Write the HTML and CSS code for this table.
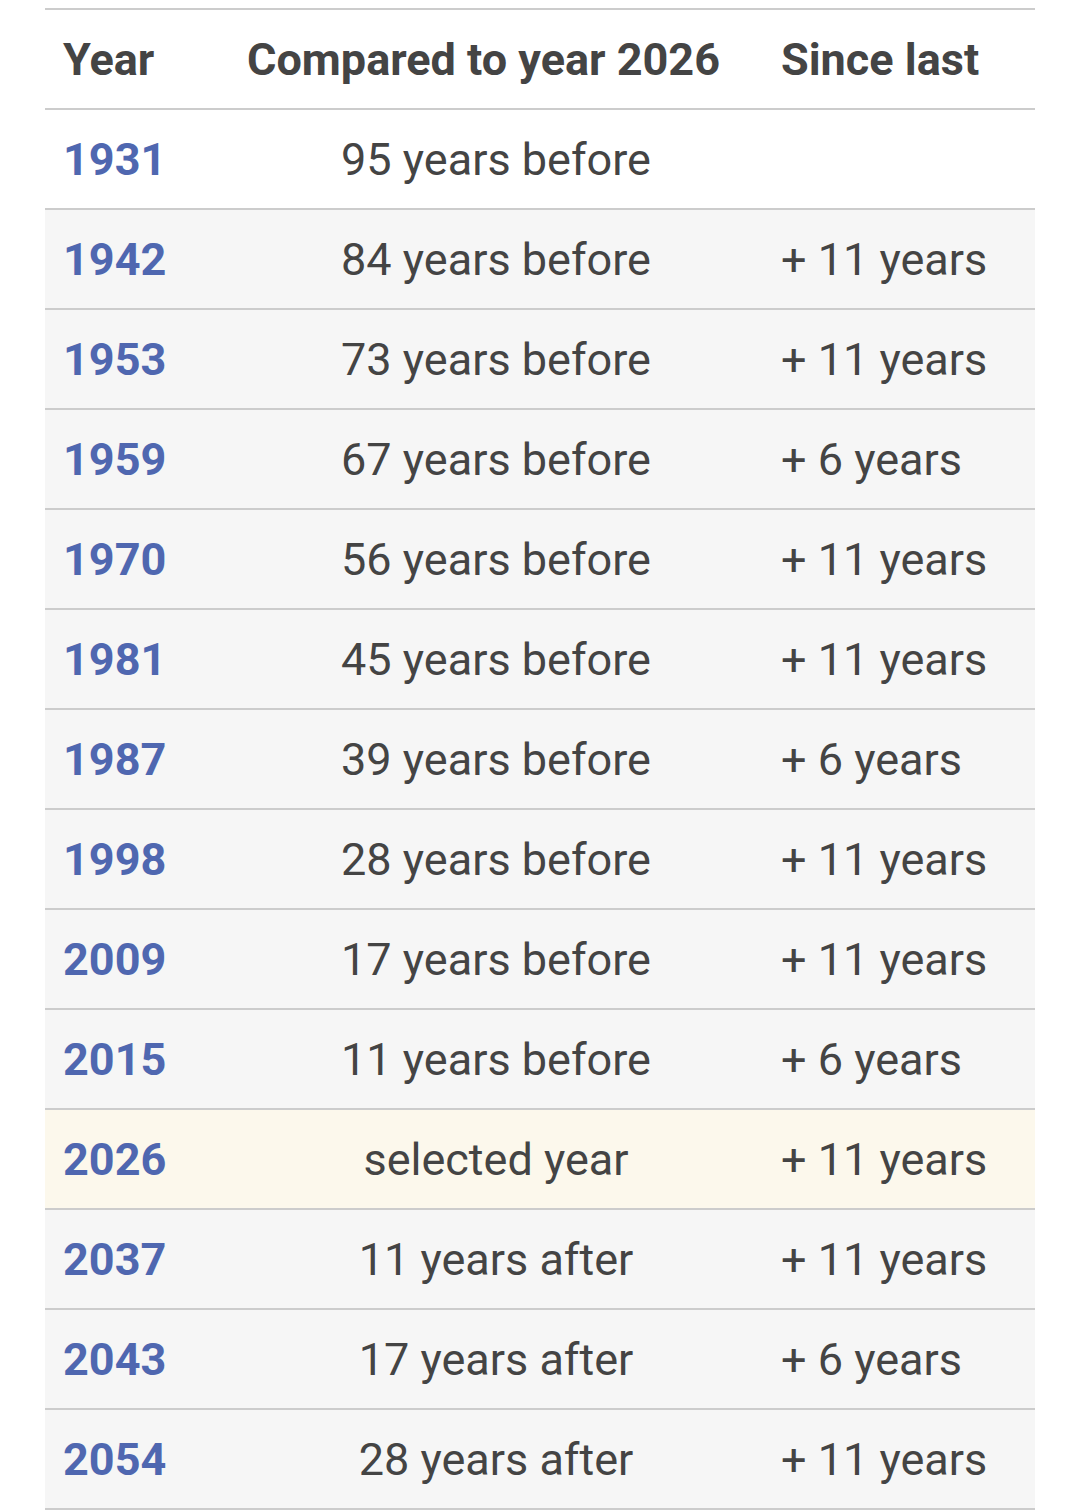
FILE: index.html
```html
<!DOCTYPE html>
<html>
<head>
<meta charset="utf-8">
<link rel="stylesheet" href="styles.css">
</head>
<body>
<div class="wrap">
<table class="years">
<thead>
<tr><th class="c-year">Year</th><th class="c-cmp">Compared to year 2026</th><th class="c-since">Since last</th></tr>
</thead>
<tbody>
<tr class="plain"><td class="c-year"><a href="#">1931</a></td><td class="c-cmp">95 years before</td><td class="c-since"></td></tr>
<tr><td class="c-year"><a href="#">1942</a></td><td class="c-cmp">84 years before</td><td class="c-since">+ 11 years</td></tr>
<tr><td class="c-year"><a href="#">1953</a></td><td class="c-cmp">73 years before</td><td class="c-since">+ 11 years</td></tr>
<tr><td class="c-year"><a href="#">1959</a></td><td class="c-cmp">67 years before</td><td class="c-since">+ 6 years</td></tr>
<tr><td class="c-year"><a href="#">1970</a></td><td class="c-cmp">56 years before</td><td class="c-since">+ 11 years</td></tr>
<tr><td class="c-year"><a href="#">1981</a></td><td class="c-cmp">45 years before</td><td class="c-since">+ 11 years</td></tr>
<tr><td class="c-year"><a href="#">1987</a></td><td class="c-cmp">39 years before</td><td class="c-since">+ 6 years</td></tr>
<tr><td class="c-year"><a href="#">1998</a></td><td class="c-cmp">28 years before</td><td class="c-since">+ 11 years</td></tr>
<tr><td class="c-year"><a href="#">2009</a></td><td class="c-cmp">17 years before</td><td class="c-since">+ 11 years</td></tr>
<tr><td class="c-year"><a href="#">2015</a></td><td class="c-cmp">11 years before</td><td class="c-since">+ 6 years</td></tr>
<tr class="selected"><td class="c-year"><a href="#">2026</a></td><td class="c-cmp">selected year</td><td class="c-since">+ 11 years</td></tr>
<tr><td class="c-year"><a href="#">2037</a></td><td class="c-cmp">11 years after</td><td class="c-since">+ 11 years</td></tr>
<tr><td class="c-year"><a href="#">2043</a></td><td class="c-cmp">17 years after</td><td class="c-since">+ 6 years</td></tr>
<tr><td class="c-year"><a href="#">2054</a></td><td class="c-cmp">28 years after</td><td class="c-since">+ 11 years</td></tr>
</tbody>
</table>
</div>
</body>
</html>
```
FILE: styles.css
```css
html, body {
  margin: 0;
  padding: 0;
  background: #ffffff;
}
body {
  font-family: Roboto, "Liberation Sans", sans-serif;
  color: #444444;
}
.wrap {
  padding: 8px 45px 0 45px;
}
.years {
  width: 990px;
  border-collapse: collapse;
  table-layout: fixed;
  border-top: 2px solid #cccccc;
  font-size: 45px;
}
.years th,
.years td {
  height: 98px;
  padding: 0 18px;
  border-bottom: 2px solid #cccccc;
  vertical-align: middle;
  white-space: nowrap;
  box-sizing: content-box;
}
.years th {
  font-weight: 700;
  text-align: left;
  color: #444444;
}
.years th.c-year, .years td.c-year { width: 148px; }
.years th.c-cmp, .years td.c-cmp { width: 498px; }
.years td.c-cmp { text-align: center; }
.years td.c-since { text-align: left; }
.years tbody tr { background: #f6f6f6; }
.years tbody tr.plain { background: #ffffff; }
.years tbody tr.selected { background: #fcf8ec; }
.years a {
  color: #4f67b0;
  font-weight: 700;
  text-decoration: none;
}
```
